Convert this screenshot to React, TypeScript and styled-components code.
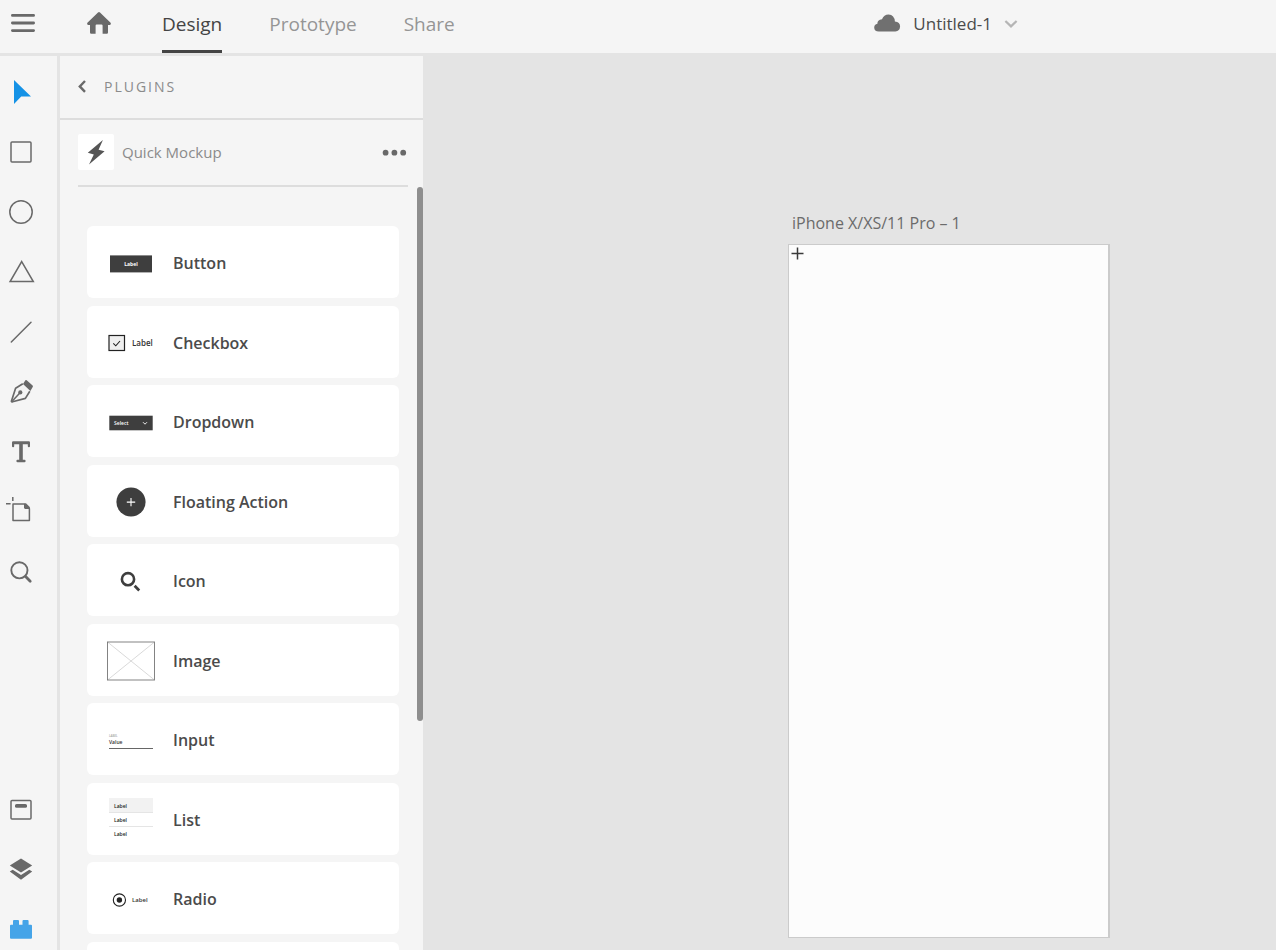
import React from 'react';
import styled, { createGlobalStyle } from 'styled-components';

const GlobalStyle = createGlobalStyle`
  * { box-sizing: border-box; }
  body {
    margin: 0;
    background: #e4e4e4;
    font-family: "Open Sans", "Noto Sans", sans-serif;
    color: #4b4b4b;
  }
  button { font: inherit; color: inherit; border: 0; padding: 0; background: none; cursor: pointer; }
  svg { display: block; overflow: visible; }
`;

const Shell = styled.div`
  display: flex;
  flex-direction: column;
  height: 100vh;
  overflow: hidden;
`;

const TopBar = styled.header`
  display: flex;
  flex: none;
  height: 56px;
  background: #f5f5f5;
  border-bottom: 3px solid #e4e4e4;
`;

const BarButton = styled.button<{ $left: number }>`
  width: 24px;
  height: 46px;
  margin-left: ${(p) => p.$left}px;
`;

const Tabs = styled.nav`
  display: flex;
  gap: 47px;
  margin-left: 51px;
`;

const Tab = styled.a<{ $active?: boolean }>`
  height: 53px;
  font-size: 19px;
  line-height: 48px;
  text-decoration: none;
  white-space: nowrap;
  color: ${(p) => (p.$active ? '#444444' : '#959595')};
  border-bottom: 3px solid ${(p) => (p.$active ? '#444444' : 'transparent')};
`;

const DocumentTitle = styled.button`
  display: flex;
  align-items: center;
  gap: 12px;
  height: 46px;
  margin-left: auto;
  margin-right: 258px;
  font-size: 17px;
  white-space: nowrap;
`;

const Workspace = styled.div`
  display: flex;
  flex: 1;
  min-height: 0;
`;

const Toolbar = styled.aside`
  display: flex;
  flex: none;
  flex-direction: column;
  justify-content: space-between;
  width: 60px;
  padding: 16px 0 1px;
  background: #f5f5f5;
  border-right: 3px solid #e4e4e4;
`;

const ToolGroup = styled.div`
  display: flex;
  flex-direction: column;
  gap: 20px;
`;

const ToolButton = styled.button`
  width: 42px;
  height: 40px;
`;

const Panel = styled.section`
  display: flex;
  flex: none;
  flex-direction: column;
  width: 363px;
  background: #f5f5f5;
`;

const PanelHeader = styled.header`
  display: flex;
  flex: none;
  align-items: center;
  gap: 18px;
  height: 64px;
  padding-left: 18px;
  border-bottom: 2px solid #dddddd;
`;

const PanelTitle = styled.h2`
  margin: 0;
  font-size: 14px;
  font-weight: 400;
  line-height: 20px;
  letter-spacing: 2px;
  color: #8b8b8b;
`;

const PluginRow = styled.div`
  display: flex;
  flex: none;
  align-items: center;
  height: 67px;
  margin: 0 15px 0 18px;
  padding-bottom: 1px;
  border-bottom: 2px solid #dddddd;
`;

const PluginLogo = styled.span`
  width: 36px;
  height: 36px;
  border-radius: 2px;
  background: #ffffff;
`;

const PluginName = styled.span`
  flex: 1;
  margin-left: 8px;
  font-size: 15px;
  color: #8b8b8b;
`;

const ScrollFrame = styled.div`
  position: relative;
  flex: 1;
  min-height: 0;
`;

const ComponentList = styled.ul`
  height: 100%;
  margin: 0;
  padding: 39px 24px 24px 27px;
  overflow-y: auto;
  scrollbar-width: none;
  list-style: none;
`;

const ComponentItem = styled.li`
  margin-bottom: 8px;
  &:nth-child(even) { margin-bottom: 7px; }
`;

const ComponentCard = styled.button`
  display: flex;
  align-items: center;
  gap: 18px;
  width: 100%;
  height: 72px;
  padding-left: 20px;
  border-radius: 6px;
  background: #ffffff;
`;

const ComponentName = styled.span`
  padding-top: 2px;
  font-size: 16px;
  font-weight: 600;
`;

const ScrollThumb = styled.div`
  position: absolute;
  top: 0;
  right: 0;
  width: 6px;
  height: 70%;
  border-radius: 3px;
  background: #8e8e8e;
`;

const Canvas = styled.main`
  flex: 1;
  min-width: 0;
  padding: 154px 0 12px 365px;
  background: #e4e4e4;
  overflow: hidden;
`;

const ArtboardName = styled.h1`
  margin: 0 0 8px 4px;
  font-size: 16px;
  font-weight: 400;
  line-height: 26px;
  color: #6b6b6b;
  white-space: nowrap;
`;

const Artboard = styled.div`
  width: 322px;
  height: 694px;
  padding: 2px;
  border: 1px solid #cbcbcb;
  border-right-width: 2px;
  background: #fcfcfc;
`;

const G = '#696969';

const tools = [
  { name: 'Select', icon: <path d="M14 8l17 16.6H21.2L14 32z" fill="#1592e6" stroke="none" /> },
  { name: 'Rectangle', icon: <rect x="11" y="10" width="20" height="20" rx="1" /> },
  { name: 'Ellipse', icon: <circle cx="21" cy="20" r="11.2" /> },
  { name: 'Polygon', icon: <path d="M21.7 9.6L33.3 29.5H10.1z" /> },
  { name: 'Line', icon: <path d="M11.3 30L31 10.3" strokeLinecap="round" /> },
  {
    name: 'Pen',
    icon: (
      <>
        <path d="M22.8 11.8L15.6 16.2L11.4 29.2Q11.6 30 12.6 29.8L25.4 26.4L29.8 19.2" strokeWidth="1.7" strokeLinejoin="round" />
        <path d="M12.4 29L19.8 21" />
        <circle cx="20.3" cy="20.4" r="2.1" fill={G} stroke="none" />
        <path d="M25.4 8.2Q26 7.6 26.7 8.2L32.6 13.6Q33.3 14.3 32.7 15L30.4 19L23 11.9z" fill={G} stroke="none" />
      </>
    ),
  },
  {
    name: 'Text',
    icon: (
      <path
        d="M13.2 9.3H28.8Q30 9.3 30 10.5V14.2Q30 15.2 28.9 15.2T27.8 14.2V12.2H22.8V27.8H24.5Q25.6 27.8 25.6 29T24.5 30.3H17.6Q16.4 30.3 16.4 29T17.6 27.8H19.2V12.2H14.2V14.2Q14.2 15.2 13.1 15.2T12 14.2V10.5Q12 9.3 13.2 9.3z"
        fill={G}
        stroke="none"
      />
    ),
  },
  {
    name: 'Artboard',
    icon: (
      <>
        <path d="M24.2 12H13V28.4H29.4V16.6" strokeLinejoin="round" />
        <path d="M24 11.3H26L30 15.3V17H25L24 16z" fill={G} stroke="none" />
        <path d="M12.8 5V9M6 11.7H10.6" />
      </>
    ),
  },
  {
    name: 'Zoom',
    icon: (
      <>
        <circle cx="19.4" cy="18.3" r="8.1" strokeWidth="1.9" />
        <path d="M25.6 24.6L30.2 29.2" strokeWidth="2.8" strokeLinecap="round" />
      </>
    ),
  },
];

const panels = [
  {
    name: 'Assets',
    icon: (
      <>
        <rect x="11" y="11.5" width="20" height="18.5" rx="1" />
        <rect x="15" y="15" width="12" height="3.8" rx="1.6" fill={G} stroke="none" />
      </>
    ),
  },
  {
    name: 'Layers',
    icon: (
      <g fill={G} stroke="none">
        <path d="M21 9.6L32.2 16.6L21 23.4L9.8 16.6z" />
        <path d="M9.8 22.6L12.7 20.7L21 25.9L29.3 20.7L32.2 22.6L21 30.8z" />
      </g>
    ),
  },
  {
    name: 'Plugins',
    icon: (
      <path
        d="M11 15.7H13V12Q13 11 14 11H18Q19 11 19 12V15.7H22.5V12Q22.5 11 23.5 11H27.6Q28.6 11 28.6 12V15.7H31Q32 15.7 32 16.7V28.7Q32 29.7 31 29.7H11Q10 29.7 10 28.7V16.7Q10 15.7 11 15.7z"
        fill="#45a4e8"
        stroke="none"
      />
    ),
  },
];

const components = [
  {
    name: 'Button',
    art: (
      <>
        <rect x="3" y="13.4" width="42" height="17" fill="#3e3e3e" />
        <text x="24" y="24" fontSize="5" fontWeight="700" fill="#ffffff" textAnchor="middle">Label</text>
      </>
    ),
  },
  {
    name: 'Checkbox',
    art: (
      <>
        <rect x="2" y="13.5" width="15.5" height="15" fill="#efefef" stroke="#222222" strokeWidth="1.2" />
        <path d="M6.3 21.3L8.8 23.8L13 19" fill="none" stroke="#222222" strokeWidth="1.1" />
        <text x="25" y="24" fontSize="8" fontWeight="600" fill="#333333">Label</text>
      </>
    ),
  },
  {
    name: 'Dropdown',
    art: (
      <>
        <rect x="2.3" y="14.7" width="43.4" height="14.6" fill="#3e3e3e" />
        <text x="7" y="24" fontSize="5" fontWeight="600" fill="#ffffff">Select</text>
        <path d="M36 21.2L38 23.2L40 21.2" fill="none" stroke="#ffffff" strokeWidth="0.9" />
      </>
    ),
  },
  {
    name: 'Floating Action',
    art: (
      <>
        <circle cx="24" cy="21" r="14.6" fill="#3e3e3e" />
        <path d="M24 17V25.2M19.8 21.1H28.2" stroke="#ffffff" strokeWidth="1.1" />
      </>
    ),
  },
  {
    name: 'Icon',
    art: (
      <g fill="none" stroke="#3e3e3e">
        <circle cx="21" cy="19.2" r="6.1" strokeWidth="2.6" />
        <path d="M27.6 25.8L32.2 30.4" strokeWidth="2.8" />
      </g>
    ),
  },
  {
    name: 'Image',
    art: (
      <g fill="none">
        <path d="M0.5 2L47.5 40M47.5 2L0.5 40" stroke="#cfcfcf" strokeWidth="0.8" />
        <rect x="0.5" y="2" width="47" height="38" stroke="#777777" strokeWidth="0.9" />
      </g>
    ),
  },
  {
    name: 'Input',
    art: (
      <>
        <text x="2" y="18" fontSize="3" fill="#888888">LABEL</text>
        <text x="2" y="25" fontSize="5" fontWeight="600" fill="#333333">Value</text>
        <path d="M2 29.5H46" stroke="#666666" />
      </>
    ),
  },
  {
    name: 'List',
    art: (
      <>
        <rect x="2" y="-1" width="44" height="14" fill="#f2f2f2" />
        <path d="M2 13.5H46M2 27.5H46" stroke="#dedede" strokeWidth="0.8" />
        <g fontSize="5" fontWeight="600" fill="#222222">
          <text x="7" y="9">Label</text>
          <text x="7" y="23">Label</text>
          <text x="7" y="37">Label</text>
        </g>
      </>
    ),
  },
  {
    name: 'Radio',
    art: (
      <>
        <circle cx="12.4" cy="22" r="6.1" fill="none" stroke="#222222" strokeWidth="1.1" />
        <circle cx="12.4" cy="22" r="2.7" fill="#222222" />
        <text x="25" y="24" fontSize="6" fontWeight="600" fill="#333333">Label</text>
      </>
    ),
  },
];

function ToolIcons({ items }: { items: typeof tools }) {
  return (
    <ToolGroup>
      {items.map((item) => (
        <ToolButton key={item.name} aria-label={item.name}>
          <svg width="42" height="40" viewBox="0 0 42 40" fill="none" stroke={G} strokeWidth="1.5">
            {item.icon}
          </svg>
        </ToolButton>
      ))}
    </ToolGroup>
  );
}

export default function App() {
  return (
    <Shell>
      <GlobalStyle />
      <TopBar>
        <BarButton $left={11} aria-label="Menu">
          <svg width="24" height="46" viewBox="0 0 24 46" stroke={G} strokeWidth="2.8" strokeLinecap="round">
            <path d="M1.4 15.4H22.6M1.4 23H22.6M1.4 30.6H22.6" />
          </svg>
        </BarButton>
        <BarButton $left={52} aria-label="Home">
          <svg width="24" height="46" viewBox="0 0 24 46" fill={G}>
            <path d="M11 12.4Q12 11.6 13 12.4L23.6 22.8Q24.6 24.4 23 25H21V32.6Q21 33.8 19.8 33.8H15.6V25.6Q15.6 24.4 14.4 24.4H9.6Q8.6 24.4 8.6 25.6V33.8H4.2Q3 33.8 3 32.6V25H1Q-0.6 24.4 0.4 22.8z" />
          </svg>
        </BarButton>
        <Tabs>
          <Tab href="#design" $active>Design</Tab>
          <Tab href="#prototype">Prototype</Tab>
          <Tab href="#share">Share</Tab>
        </Tabs>
        <DocumentTitle>
          <svg width="27" height="18" viewBox="0 0 27 18" fill="#707070">
            <path d="M4.8 17.4Q0.2 17.4 0.2 13.4Q0.3 10.6 3.4 9.8Q3.2 5.8 8 5.2Q9.8 0.8 14.6 0.6Q20.4 1 20.9 7.6Q26.1 8.2 26.1 12.6Q25.8 17.2 21.4 17.4z" />
          </svg>
          <span>Untitled-1</span>
          <svg width="14" height="10" viewBox="0 0 14 10" fill="none" stroke="#b5b5b5" strokeWidth="2.2">
            <path d="M1.4 3L7 8.4L12.6 3" />
          </svg>
        </DocumentTitle>
      </TopBar>
      <Workspace>
        <Toolbar>
          <ToolIcons items={tools} />
          <ToolIcons items={panels} />
        </Toolbar>
        <Panel>
          <PanelHeader>
            <button aria-label="Back">
              <svg width="8" height="14" viewBox="0 0 8 14" fill="none" stroke={G} strokeWidth="2.4">
                <path d="M7 1L1.8 6.4L7 11.8" />
              </svg>
            </button>
            <PanelTitle>PLUGINS</PanelTitle>
          </PanelHeader>
          <PluginRow>
            <PluginLogo>
              <svg width="36" height="36" viewBox="0 0 36 36" fill="#555555">
                <path d="M24.9 6L9.8 18.8L15.8 20.4L11 30.4L26.6 17.2L20.6 15.8z" />
              </svg>
            </PluginLogo>
            <PluginName>Quick Mockup</PluginName>
            <button aria-label="More options">
              <svg width="26" height="8" viewBox="0 0 26 8" fill={G}>
                <circle cx="3.6" cy="4.7" r="2.9" />
                <circle cx="12.4" cy="4.7" r="2.9" />
                <circle cx="21.2" cy="4.7" r="2.9" />
              </svg>
            </button>
          </PluginRow>
          <ScrollFrame>
            <ComponentList>
              {components.map((item) => (
                <ComponentItem key={item.name}>
                  <ComponentCard>
                    <svg width="48" height="40" viewBox="0 0 48 40" aria-hidden="true">{item.art}</svg>
                    <ComponentName>{item.name}</ComponentName>
                  </ComponentCard>
                </ComponentItem>
              ))}
              <ComponentItem>
                <ComponentCard as="div" />
              </ComponentItem>
            </ComponentList>
            <ScrollThumb />
          </ScrollFrame>
        </Panel>
        <Canvas>
          <ArtboardName>iPhone X/XS/11 Pro – 1</ArtboardName>
          <Artboard>
            <svg width="13" height="13" viewBox="0 0 13 13" stroke="#3a3a3a" strokeWidth="1.5">
              <path d="M6.5 0.5V12.5M0.5 6.5H12.5" />
            </svg>
          </Artboard>
        </Canvas>
      </Workspace>
    </Shell>
  );
}
